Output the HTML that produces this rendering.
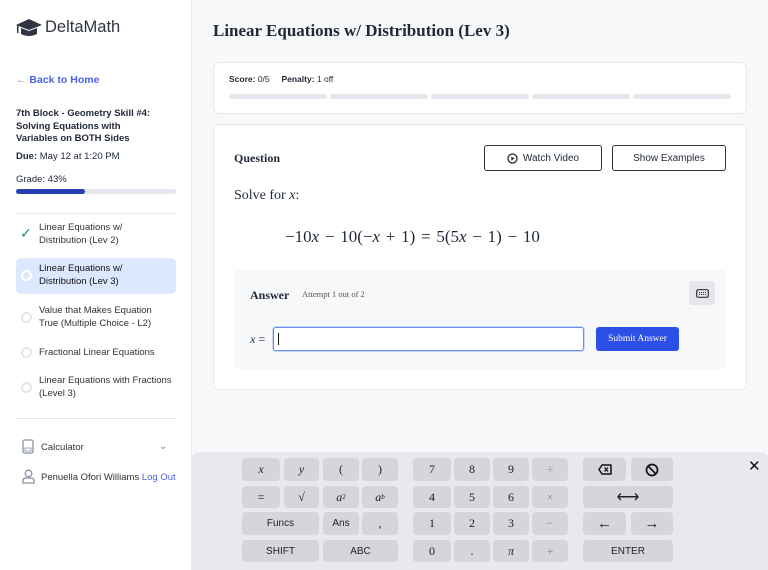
<!DOCTYPE html>
<html><head><meta charset="utf-8"><style>
*{box-sizing:border-box;margin:0;padding:0}
body{width:768px;height:570px;overflow:hidden;font-family:"Liberation Sans",sans-serif;background:#f7f8fa;position:relative;color:#1f2937}
.a{position:absolute}
.side{left:0;top:0;width:192px;height:570px;background:#fff;border-right:1px solid #e5e7eb}
.serif{font-family:"Liberation Serif",serif}
.card{background:#fff;border:1px solid #e6e8ec;border-radius:6px}
.k{position:absolute;background:#d4d6db;border-radius:4px;font-size:11px;display:flex;align-items:center;justify-content:center;color:#222}
.m{font-family:"Liberation Serif",serif;font-size:12px}
.it{font-style:italic}
.circ{width:11px;height:11px;border-radius:50%;border:2px solid #e3e6ec}
.it2{font-size:9.5px;color:#333;line-height:13px}
</style></head><body>
<div class="a side">
 <svg class="a" style="left:15px;top:18px" width="28" height="20" viewBox="0 0 28 20"><path d="M14 1 L27 7 L14 12 L1 7 Z" fill="#2f3542"/><path d="M6 10 v6 q8 4 16 0 v-6 l-8 3 z" fill="#2f3542"/><rect x="2" y="7" width="1.5" height="8" fill="#2f3542"/></svg>
 <div class="a" style="left:45px;top:18px;font-size:16.5px;color:#2f3542">DeltaMath</div>
 <div class="a" style="left:16px;top:74px;font-size:10.5px;color:#4a63e7;font-weight:bold"><span style="color:#9aa3b5;font-weight:normal">←</span> Back to Home</div>
 <div class="a" style="left:16px;top:108px;font-size:9.5px;font-weight:bold;line-height:12.5px;color:#1f2937">7th Block - Geometry Skill #4:<br>Solving Equations with<br>Variables on BOTH Sides</div>
 <div class="a" style="left:16px;top:151px;font-size:9.5px"><b>Due:</b> May 12 at 1:20 PM</div>
 <div class="a" style="left:16px;top:174px;font-size:9.5px">Grade: 43%</div>
 <div class="a" style="left:16px;top:189px;width:160px;height:5px;background:#e4e7ee;border-radius:3px"><div style="width:69px;height:5px;background:#2440b3;border-radius:3px"></div></div>
 <div class="a" style="left:16px;top:213px;width:160px;height:1px;background:#e8eaee"></div>
 <div class="a" style="left:20px;top:225px;color:#1a9a52;font-size:14px">✓</div>
 <div class="a it2" style="left:39px;top:221px">Linear Equations w/<br>Distribution (Lev 2)</div>
 <div class="a" style="left:16px;top:258px;width:160px;height:36px;background:#dbe8fe;border-radius:5px"></div>
 <div class="a circ" style="left:21px;top:270px;border-color:#fff"></div>
 <div class="a it2" style="left:39px;top:262px;color:#111">Linear Equations w/<br>Distribution (Lev 3)</div>
 <div class="a circ" style="left:21px;top:312px"></div>
 <div class="a it2" style="left:39px;top:304px">Value that Makes Equation<br>True (Multiple Choice - L2)</div>
 <div class="a circ" style="left:21px;top:347px"></div>
 <div class="a it2" style="left:39px;top:346px">Fractional Linear Equations</div>
 <div class="a circ" style="left:21px;top:382px"></div>
 <div class="a it2" style="left:39px;top:374px">Linear Equations with Fractions<br>(Level 3)</div>
 <div class="a" style="left:16px;top:418px;width:160px;height:1px;background:#e3e5e9"></div>
 <svg class="a" style="left:22px;top:439px" width="12" height="15"><rect x="1" y="1" width="10" height="13" rx="1.5" fill="none" stroke="#8a93a5" stroke-width="1.3"/><rect x="3" y="9" width="6" height="3" fill="none" stroke="#8a93a5" stroke-width=".8"/></svg>
 <div class="a it2" style="left:41px;top:441px">Calculator</div>
 <div class="a" style="left:159px;top:441px;font-size:10px;color:#888">⌄</div>
 <svg class="a" style="left:22px;top:469px" width="13" height="15"><circle cx="6.5" cy="4.5" r="3.3" fill="none" stroke="#8a93a5" stroke-width="1.3"/><path d="M1 14 v-2 q0-3 3-3 h5 q3 0 3 3 v2 z" fill="none" stroke="#8a93a5" stroke-width="1.3"/></svg>
 <div class="a it2" style="left:41px;top:471px">Penuella Ofori Williams <span style="color:#4a63e7">Log Out</span></div>
</div>
<div class="a serif" style="left:213px;top:21px;font-size:17px;font-weight:bold;color:#1f2937">Linear Equations w/ Distribution (Lev 3)</div>
<div class="a card" style="left:213px;top:62px;width:534px;height:52px"></div>
<div class="a" style="left:229px;top:74px;font-size:8.5px"><b>Score:</b> 0/5 &nbsp;&nbsp;&nbsp;&nbsp;<b>Penalty:</b> 1 off</div>
<div class="a" style="left:229px;top:94px;width:502px;height:5px;display:flex;gap:3px"><div style="flex:1;background:#e4e7ee;border-radius:3px"></div><div style="flex:1;background:#e4e7ee;border-radius:3px"></div><div style="flex:1;background:#e4e7ee;border-radius:3px"></div><div style="flex:1;background:#e4e7ee;border-radius:3px"></div><div style="flex:1;background:#e4e7ee;border-radius:3px"></div></div>
<div class="a card" style="left:213px;top:124px;width:534px;height:266px"></div>
<div class="a serif" style="left:234px;top:151px;font-size:12px;font-weight:bold">Question</div>
<div class="a" style="left:484px;top:145px;width:118px;height:26px;border:1px solid #333;border-radius:3px;font-size:10px;display:flex;align-items:center;justify-content:center;gap:5px;background:#fff"><svg width="11" height="11"><circle cx="5.5" cy="5.5" r="4.5" fill="none" stroke="#222" stroke-width="1.3"/><path d="M4.3 3.5 L7.5 5.5 L4.3 7.5Z" fill="#222"/></svg>Watch Video</div>
<div class="a" style="left:612px;top:145px;width:114px;height:26px;border:1px solid #333;border-radius:3px;font-size:10px;display:flex;align-items:center;justify-content:center;background:#fff">Show Examples</div>
<div class="a serif" style="left:234px;top:188px;font-size:14px">Solve for <i>x</i>:</div>
<div class="a serif" style="left:285px;top:227px;font-size:17px;word-spacing:1.5px;white-space:nowrap">−10<i>x</i> − 10(−<i>x</i> + 1) = 5(5<i>x</i> − 1) − 10</div>
<div class="a" style="left:234px;top:270px;width:492px;height:99px;background:#f7f8fa;border-radius:4px"></div>
<div class="a serif" style="left:250px;top:288px;font-size:12px;font-weight:bold">Answer</div>
<div class="a serif" style="left:302px;top:289px;font-size:8.5px;color:#555">Attempt 1 out of 2</div>
<div class="a" style="left:689px;top:281px;width:26px;height:24px;background:#e4e6ea;border-radius:3px;display:flex;align-items:center;justify-content:center"><svg width="13" height="9"><rect x=".7" y=".7" width="11.6" height="7.6" rx="1.5" fill="none" stroke="#333" stroke-width="1.2"/><path d="M3 3.5h7M3 5.5h7" stroke="#333" stroke-width="1" stroke-dasharray="1 1"/></svg></div>
<div class="a serif" style="left:250px;top:332px;font-size:12px"><i>x</i> =</div>
<div class="a" style="left:273px;top:327px;width:311px;height:24px;background:#fff;border:1.5px solid #6b8cf0;border-radius:3px;box-shadow:0 0 0 1px #c9d6fb"><div style="position:absolute;left:4px;top:5px;width:1px;height:12px;background:#111"></div></div>
<div class="a serif" style="left:596px;top:327px;width:83px;height:24px;background:#2c4fe6;color:#fff;border-radius:3px;font-size:9.5px;display:flex;align-items:center;justify-content:center">Submit Answer</div>
<div class="a" style="left:192px;top:452px;width:576px;height:118px;background:#e8e9ec;border-radius:6px 6px 0 0"></div>
<div class="k m it" style="left:242px;top:458px;width:38px;height:23px">x</div>
<div class="k m it" style="left:284px;top:458px;width:35px;height:23px">y</div>
<div class="k m" style="left:323px;top:458px;width:36px;height:23px">(</div>
<div class="k m" style="left:362px;top:458px;width:36px;height:23px">)</div>
<div class="k m" style="left:242px;top:486px;width:38px;height:22px">=</div>
<div class="k m" style="left:284px;top:486px;width:35px;height:22px">√</div>
<div class="k m" style="left:323px;top:486px;width:36px;height:22px"><i>a</i><sup style="font-size:7px">2</sup></div>
<div class="k m" style="left:362px;top:486px;width:36px;height:22px"><i>a</i><sup style="font-size:7px;font-style:italic">b</sup></div>
<div class="k" style="left:242px;top:512px;width:77px;height:23px;font-size:10px">Funcs</div>
<div class="k" style="left:323px;top:512px;width:36px;height:23px;font-size:10px">Ans</div>
<div class="k m" style="left:362px;top:512px;width:36px;height:23px">,</div>
<div class="k" style="left:242px;top:540px;width:77px;height:22px;font-size:10px">SHIFT</div>
<div class="k" style="left:323px;top:540px;width:75px;height:22px;font-size:10px">ABC</div>
<div class="k m" style="left:413px;top:458px;width:38px;height:23px">7</div>
<div class="k m" style="left:454px;top:458px;width:36px;height:23px">8</div>
<div class="k m" style="left:493px;top:458px;width:36px;height:23px">9</div>
<div class="k m" style="left:532px;top:458px;width:36px;height:23px;color:#888">÷</div>
<div class="k m" style="left:413px;top:486px;width:38px;height:22px">4</div>
<div class="k m" style="left:454px;top:486px;width:36px;height:22px">5</div>
<div class="k m" style="left:493px;top:486px;width:36px;height:22px">6</div>
<div class="k m" style="left:532px;top:486px;width:36px;height:22px;color:#888">×</div>
<div class="k m" style="left:413px;top:512px;width:38px;height:23px">1</div>
<div class="k m" style="left:454px;top:512px;width:36px;height:23px">2</div>
<div class="k m" style="left:493px;top:512px;width:36px;height:23px">3</div>
<div class="k m" style="left:532px;top:512px;width:36px;height:23px;color:#888">−</div>
<div class="k m" style="left:413px;top:540px;width:38px;height:22px">0</div>
<div class="k m" style="left:454px;top:540px;width:36px;height:22px">.</div>
<div class="k m it" style="left:493px;top:540px;width:36px;height:22px">π</div>
<div class="k m" style="left:532px;top:540px;width:36px;height:22px;color:#888">+</div>
<div class="k" style="left:583px;top:458px;width:43px;height:23px"><svg width="14" height="11"><path d="M4 1 H13 V10 H4 L1 5.5 Z" fill="none" stroke="#111" stroke-width="1.5" stroke-linejoin="round"/><path d="M6.5 3.5l3.5 4M10 3.5l-3.5 4" stroke="#111" stroke-width="1.3"/></svg></div>
<div class="k" style="left:631px;top:458px;width:42px;height:23px"><svg width="14" height="14"><circle cx="7" cy="7" r="5.5" fill="none" stroke="#111" stroke-width="1.7"/><path d="M3 3l8 8" stroke="#111" stroke-width="1.7"/></svg></div>
<div class="k" style="left:583px;top:486px;width:90px;height:22px;font-size:16px">⟷</div>
<div class="k" style="left:583px;top:512px;width:43px;height:23px;font-size:15px">←</div>
<div class="k" style="left:631px;top:512px;width:42px;height:23px;font-size:15px">→</div>
<div class="k" style="left:583px;top:540px;width:90px;height:22px;font-size:10px">ENTER</div>
<div class="a" style="left:748px;top:457px;font-size:15px;color:#111">✕</div>
</body></html>
